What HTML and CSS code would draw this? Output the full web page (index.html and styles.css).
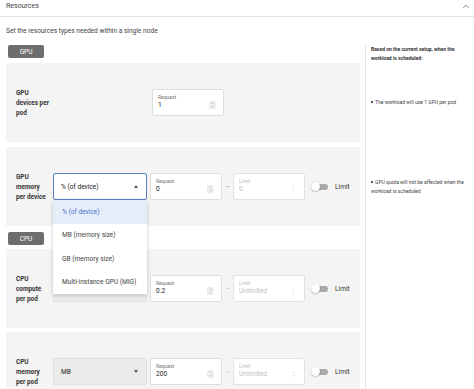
FILE: index.html
```html
<!DOCTYPE html>
<html>
<head>
<meta charset="utf-8">
<link rel="stylesheet" href="styles.css">
</head>
<body>
<div class="page">
  <header class="head">
    <span class="title">Resources</span>
    <svg class="chev" width="8" height="5" viewBox="0 0 8 5"><path d="M1 4 L4 1 L7 4" fill="none" stroke="#888" stroke-width="0.8"/></svg>
  </header>
  <p class="intro">Set the resources types needed within a single node</p>

  <div class="grid">
    <div class="cell cell-badge"><span class="badge">GPU</span></div>
    <div class="note note-head"><b>Based on the current setup, when the workload is scheduled:</b></div>

    <div class="cell cell-gap5">
      <div class="card">
        <div class="label"><span>GPU</span><span>devices per</span><span>pod</span></div>
        <div class="field field-solo">
          <span class="flabel">Request</span>
          <span class="fvalue">1</span>
          <svg class="step" width="7" height="8" viewBox="0 0 7 8"><rect x="0.5" y="0.5" width="6" height="7" rx="1" fill="#f2f2f2" stroke="#ddd" stroke-width="0.5"/><path d="M2 3 L3.5 1.8 L5 3 M2 5 L3.5 6.2 L5 5" fill="none" stroke="#aaa" stroke-width="0.6"/></svg>
        </div>
      </div>
    </div>
    <div class="note note-gap5"><span class="bullet">The workload will use 1 GPU per pod</span></div>

    <div class="cell cell-gap6">
      <div class="card">
        <div class="label"><span>GPU</span><span>memory</span><span>per device</span></div>
        <div class="select-wrap">
          <div class="select select-open">
            <span>% (of device)</span>
            <span class="tri tri-up"></span>
          </div>
          <ul class="menu">
            <li class="menu-item menu-active">% (of device)</li>
            <li class="menu-item">MB (memory size)</li>
            <li class="menu-item">GB (memory size)</li>
            <li class="menu-item">Multi-instance GPU (MIG)</li>
          </ul>
        </div>
        <div class="field">
          <span class="flabel">Request</span>
          <span class="fvalue">0</span>
          <svg class="step" width="7" height="8" viewBox="0 0 7 8"><rect x="0.5" y="0.5" width="6" height="7" rx="1" fill="#f2f2f2" stroke="#ddd" stroke-width="0.5"/><path d="M2 3 L3.5 1.8 L5 3 M2 5 L3.5 6.2 L5 5" fill="none" stroke="#aaa" stroke-width="0.6"/></svg>
        </div>
        <span class="dash">–</span>
        <div class="field field-off">
          <span class="flabel">Limit</span>
          <span class="fvalue">0</span>
          <svg class="step" width="7" height="8" viewBox="0 0 7 8"><path d="M2 3 L3.5 1.8 L5 3 M2 5 L3.5 6.2 L5 5" fill="none" stroke="#ddd" stroke-width="0.6"/></svg>
        </div>
        <span class="toggle"><span class="knob"></span></span>
        <span class="tlabel">Limit</span>
      </div>
    </div>
    <div class="note note-gap6"><span class="bullet">GPU quota will not be affected when the workload is scheduled</span></div>

    <div class="cell cell-badge2"><span class="badge">CPU</span></div>
    <div class="note"></div>

    <div class="cell cell-gap4">
      <div class="card">
        <div class="label"><span>CPU</span><span>compute</span><span>per pod</span></div>
        <div class="select select-gray"></div>
        <div class="field">
          <span class="flabel">Request</span>
          <span class="fvalue">0.2</span>
          <svg class="step" width="7" height="8" viewBox="0 0 7 8"><rect x="0.5" y="0.5" width="6" height="7" rx="1" fill="#f2f2f2" stroke="#ddd" stroke-width="0.5"/><path d="M2 3 L3.5 1.8 L5 3 M2 5 L3.5 6.2 L5 5" fill="none" stroke="#aaa" stroke-width="0.6"/></svg>
        </div>
        <span class="dash">-</span>
        <div class="field field-off">
          <span class="flabel">Limit</span>
          <span class="fvalue">Unlimited</span>
          <svg class="step" width="7" height="8" viewBox="0 0 7 8"><path d="M2 3 L3.5 1.8 L5 3 M2 5 L3.5 6.2 L5 5" fill="none" stroke="#ddd" stroke-width="0.6"/></svg>
        </div>
        <span class="toggle"><span class="knob"></span></span>
        <span class="tlabel">Limit</span>
      </div>
    </div>
    <div class="note"></div>

    <div class="cell">
      <div class="card">
        <div class="label"><span>CPU</span><span>memory</span><span>per pod</span></div>
        <div class="select select-gray">
          <span>MB</span>
          <span class="tri tri-down"></span>
        </div>
        <div class="field">
          <span class="flabel">Request</span>
          <span class="fvalue">200</span>
          <svg class="step" width="7" height="8" viewBox="0 0 7 8"><rect x="0.5" y="0.5" width="6" height="7" rx="1" fill="#f2f2f2" stroke="#ddd" stroke-width="0.5"/><path d="M2 3 L3.5 1.8 L5 3 M2 5 L3.5 6.2 L5 5" fill="none" stroke="#aaa" stroke-width="0.6"/></svg>
        </div>
        <span class="dash">-</span>
        <div class="field field-off">
          <span class="flabel">Limit</span>
          <span class="fvalue">Unlimited</span>
          <svg class="step" width="7" height="8" viewBox="0 0 7 8"><path d="M2 3 L3.5 1.8 L5 3 M2 5 L3.5 6.2 L5 5" fill="none" stroke="#ddd" stroke-width="0.6"/></svg>
        </div>
        <span class="toggle"><span class="knob"></span></span>
        <span class="tlabel">Limit</span>
      </div>
    </div>
    <div class="note"></div>
  </div>
</div>
</body>
</html>
```

FILE: styles.css
```css
* { box-sizing: border-box; }
html, body { margin: 0; padding: 0; background: #fff; }
html { overflow: hidden; height: 389px; }
body {
  font-family: Roboto, "Liberation Sans", sans-serif;
  color: #333;
  width: 474px;
  height: 389px;
  overflow: hidden;
}
.page { width: 474px; }

.head {
  height: 17px;
  border-bottom: 1px solid #e4e4e4;
  display: flex;
  align-items: center;
  justify-content: space-between;
  padding: 0 4px 5px 6px;
}
.title { font-size: 7px; color: #444; line-height: 10px; }
.chev { display: block; margin-top: 1px; }

.intro {
  margin: 0;
  padding: 9px 0 9px 6px;
  font-size: 6.6px;
  line-height: 10px;
  color: #444;
}

.grid {
  display: grid;
  grid-template-columns: 359px 1fr;
}

.cell { padding-left: 6px; }
.cell-badge { padding-left: 8px; padding-bottom: 5px; }
.cell-badge2 { padding-left: 8px; padding-bottom: 4px; }
.cell-gap5 { padding-bottom: 5px; }
.cell-gap6 { padding-bottom: 6px; }
.cell-gap4 { padding-bottom: 4px; }

.badge {
  display: flex;
  align-items: center;
  justify-content: center;
  width: 36px;
  height: 13px;
  background: #6e6e6e;
  color: #fff;
  font-size: 6.5px;
  border-radius: 2px;
}

.note {
  margin-left: 6px;
  border-left: 1px solid #e6e6e6;
  padding: 0 3px 0 5px;
  font-size: 5px;
  line-height: 9px;
  color: #444;
  display: flex;
  align-items: center;
}
.note-head { align-items: flex-start; padding-top: 0; }
.note-head b { font-weight: 700; color: #333; }
.note-gap5 { padding-bottom: 5px; }
.note-gap6 { padding-bottom: 6px; }
.bullet::before {
  content: "";
  display: inline-block;
  width: 2px;
  height: 2px;
  background: #555;
  margin-right: 2px;
  vertical-align: middle;
  position: relative;
  top: -0.5px;
}

.card {
  background: #f4f4f4;
  height: 79px;
  width: 354px;
  display: flex;
  align-items: center;
  padding-left: 10px;
}

.label {
  width: 35px;
  margin-right: 2px;
  font-size: 6.4px;
  font-weight: 700;
  line-height: 10px;
  color: #333;
  display: flex;
  flex-direction: column;
  white-space: nowrap;
}

.select-wrap { position: relative; }
.select {
  width: 94px;
  height: 27px;
  border: 1px solid #dcdcdc;
  border-radius: 2px;
  background: #fff;
  display: flex;
  align-items: center;
  justify-content: space-between;
  padding: 0 8px 0 7px;
  font-size: 6.6px;
  color: #222;
}
.select-open { border-color: #5a80c4; }
.select-gray { background: #ebebeb; border-color: #e0e0e0; }
.tri { width: 0; height: 0; border-left: 2.5px solid transparent; border-right: 2.5px solid transparent; }
.tri-up { border-bottom: 3px solid #555; }
.tri-down { border-top: 3px solid #555; }

.menu {
  position: absolute;
  left: 0;
  top: 27px;
  width: 94px;
  margin: 0;
  padding: 0;
  list-style: none;
  background: #fff;
  box-shadow: 0 1px 4px rgba(0,0,0,0.22);
  z-index: 5;
}
.menu-item {
  height: 23.5px;
  display: flex;
  align-items: center;
  padding-left: 9px;
  font-size: 6.6px;
  color: #444;
}
.menu-active { background: #e6edf9; color: #4673cf; }

.field {
  position: relative;
  width: 72px;
  height: 27px;
  margin-left: 3px;
  background: #fff;
  border: 1px solid #dedede;
  border-radius: 2px;
  padding: 4px 0 0 5px;
  display: flex;
  flex-direction: column;
}
.field-solo { margin-left: 99px; }
.flabel { font-size: 5px; line-height: 7px; color: #777; }
.fvalue { font-size: 6.6px; line-height: 9px; color: #222; }
.field-off { margin-left: 0; border-color: #e2e2e2; }
.field-off .flabel, .field-off .fvalue { color: #bdbdbd; }
.step { position: absolute; right: 7px; top: 11px; }

.dash {
  width: 11px;
  text-align: center;
  font-size: 6.5px;
  color: #999;
}

.toggle {
  position: relative;
  width: 16px;
  height: 6px;
  margin-left: 7px;
  background: #a9a9a9;
  border-radius: 3px;
}
.knob {
  position: absolute;
  left: -1px;
  top: -1.5px;
  width: 9px;
  height: 9px;
  border-radius: 50%;
  background: #fff;
  box-shadow: 0 0.5px 1.5px rgba(0,0,0,0.35);
}
.tlabel { margin-left: 7px; font-size: 6.6px; color: #333; }
```
